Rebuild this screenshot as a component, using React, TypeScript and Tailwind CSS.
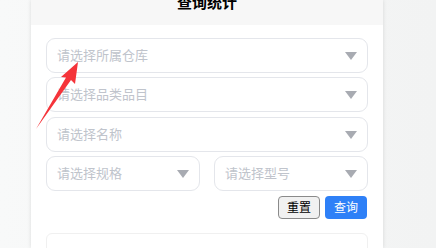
import type { ReactNode } from "react";

const font = {
	fontFamily: '"Liberation Sans", "Noto Sans CJK SC", sans-serif',
};

function Caret() {
	return (
		<svg aria-hidden="true" className="h-[8px] w-[12px] shrink-0" viewBox="0 0 12 8">
			<path d="M0 0 L12 0 L6 8 Z" fill="#a8abb2" />
		</svg>
	);
}

function SelectBox({ placeholder, className = "" }: { placeholder: string; className?: string }) {
	return (
		<div
			className={`flex h-[35px] items-center justify-between rounded-[9px] border border-[#e4e6eb] bg-white pr-[10px] pl-[10px] ${className}`}
		>
			<span className="truncate text-[13px] text-[#c0c4cc] leading-none">{placeholder}</span>
			<Caret />
		</div>
	);
}

function ActionButton({ children, primary }: { children: ReactNode; primary?: boolean }) {
	return (
		<button
			className={`flex h-[23px] w-[42px] items-center justify-center rounded-[4px] text-[12px] leading-none ${
				primary
					? "bg-[#2e80f7] text-white"
					: "border border-[#8a8a8a] bg-[#f1f1f1] text-black"
			}`}
			type="button"
		>
			{children}
		</button>
	);
}

export default function App() {
	return (
		<div
			className="relative flex h-[248px] w-[436px] overflow-hidden bg-gradient-to-r from-[#f8f9f9] to-[#f2f3f3]"
			style={font}
		>
			<div className="ml-[31px] flex w-[352px] flex-col bg-white shadow-[0_0_4px_rgba(0,0,0,0.12)]">
				<div className="flex h-[25px] shrink-0 justify-center overflow-hidden bg-[#f7f7f7]">
					<h1 className="-mt-[5px] font-bold text-[15px] text-black leading-[15px]">查询统计</h1>
				</div>

				<div className="flex flex-col px-[15px] pt-[13px]">
					<SelectBox placeholder="请选择所属仓库" />
					<SelectBox className="mt-[4px]" placeholder="请选择品类品目" />
					<SelectBox className="mt-[5px]" placeholder="请选择名称" />
					<div className="mt-[4px] flex gap-[14px]">
						<SelectBox className="flex-1" placeholder="请选择规格" />
						<SelectBox className="flex-1" placeholder="请选择型号" />
					</div>
					<div className="mt-[5px] flex justify-end gap-[5px] pr-[1px]">
						<ActionButton>重置</ActionButton>
						<ActionButton primary>查询</ActionButton>
					</div>
					<div className="mt-[14px] h-[40px] rounded-t-[6px] border border-[#f0f0f0] bg-white" />
				</div>
			</div>

			{/* annotation arrow over the first select */}
			<svg
				aria-hidden="true"
				className="pointer-events-none absolute top-0 left-0 h-[248px] w-[436px]"
				viewBox="0 0 436 248"
			>
				<polygon fill="#f5343a" points="78,62 75,84 71,80 36,129 66,77.5 61,77" />
			</svg>
		</div>
	);
}
